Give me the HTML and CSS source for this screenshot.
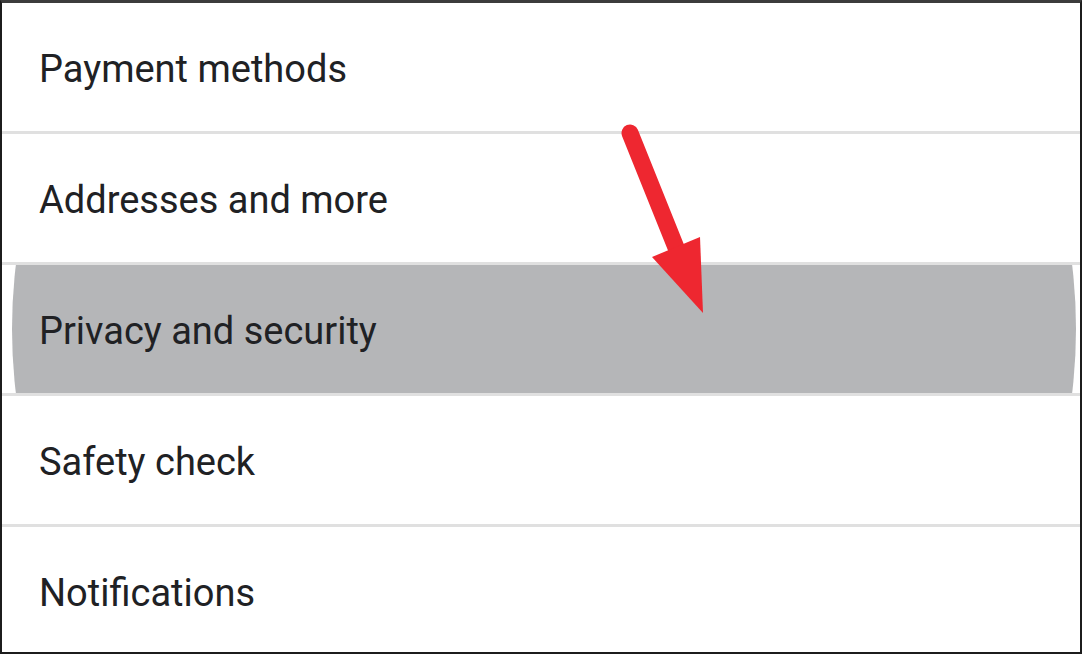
FILE: index.html
```html
<!DOCTYPE html>
<html>
<head>
<meta charset="utf-8">
<link rel="stylesheet" href="styles.css">
</head>
<body>
<div class="screen">
  <div class="row"><span class="label">Payment methods</span></div>
  <div class="row"><span class="label">Addresses and more</span></div>
  <div class="row pressed"><div class="ripple"></div><span class="label">Privacy and security</span></div>
  <div class="row"><span class="label">Safety check</span></div>
  <div class="row last"><span class="label">Notifications</span></div>
  <svg class="arrow" width="1082" height="654" viewBox="0 0 1082 654">
    <line x1="630" y1="133" x2="681" y2="260" stroke="#ee2730" stroke-width="17" stroke-linecap="round"/>
    <polygon points="652,257 700,237 703,313" fill="#ee2730"/>
  </svg>
</div>
</body>
</html>
```
FILE: styles.css
```css
html, body {
  margin: 0;
  padding: 0;
  background: #ffffff;
}
.screen {
  position: relative;
  width: 1082px;
  height: 654px;
  box-sizing: border-box;
  border-top: 3px solid #3c3c3c;
  border-left: 2px solid #1c1c1c;
  border-right: 2px solid #1c1c1c;
  border-bottom: 2px solid #1c1c1c;
  overflow: hidden;
  display: flex;
  flex-direction: column;
  font-family: Roboto, "Noto Sans", sans-serif;
}
.row {
  position: relative;
  height: 124px;
  flex: 0 0 124px;
  border-bottom: 3px solid #e0e0e0;
  display: flex;
  align-items: center;
  padding-left: 37px;
  padding-top: 4px;
  overflow: hidden;
}
.row.last {
  border-bottom: none;
  flex: 1 1 auto;
  padding-top: 7px;
}
.label {
  position: relative;
  font-size: 38px;
  color: #202124;
}
.ripple {
  position: absolute;
  left: 10px;
  top: calc(50% - 532px);
  width: 1064px;
  height: 1064px;
  border-radius: 50%;
  background: #b5b6b8;
}
.arrow {
  position: absolute;
  left: -2px;
  top: -3px;
  pointer-events: none;
}
```
